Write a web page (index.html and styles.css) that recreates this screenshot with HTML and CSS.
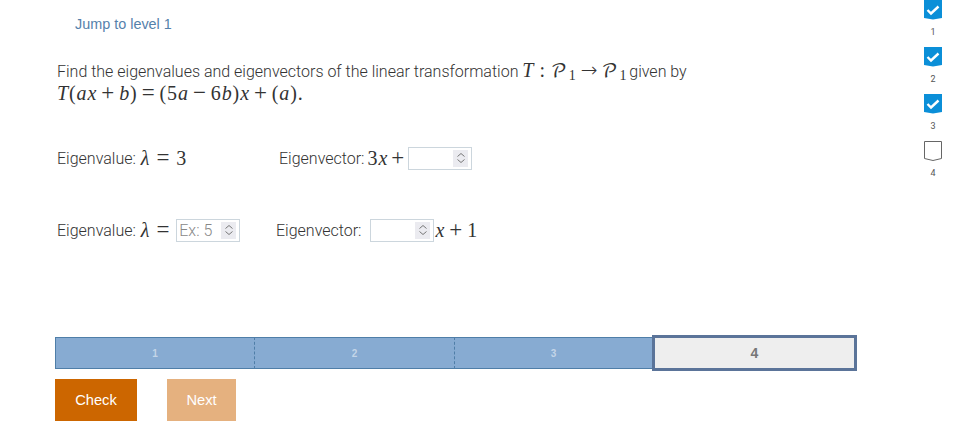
FILE: index.html
```html
<!DOCTYPE html>
<html lang="en">
  <head>
    <meta charset="UTF-8" />
    <title>Eigenvalues and eigenvectors</title>
    <link rel="stylesheet" href="styles.css">
  </head>
  <body>
    <div class="page">
      <div class="main">
        <a href="#" class="jump-link">Jump to level 1</a>

        <p class="question">
          Find the eigenvalues and eigenvectors of the linear transformation
          <span class="math"><i>T</i><span class="op colon">:</span><span class="script">𝒫</span><sub>1</sub><span class="op arrow">→</span><span class="script">𝒫</span><sub>1</sub></span>
          given by<br>
          <span class="math"><i>T</i>(<i>ax</i><span class="op">+</span><i>b</i>)<span class="op">=</span>(5<i>a</i><span class="op">−</span>6<i>b</i>)<i>x</i><span class="op">+</span>(<i>a</i>).</span>
        </p>

        <div class="answer-row row-first">
          <div class="value-cell">
            <span>Eigenvalue:</span>
            <span class="math"><i>λ</i><span class="op">=</span>3</span>
          </div>
          <div class="vector-cell">
            <span>Eigenvector:</span>
            <span class="math">3<i>x</i><span class="op trailing">+</span></span>
            <span class="num-input">
              <input type="text" aria-label="Eigenvector coefficient">
              <span class="spin"><svg viewBox="0 0 10 14" width="10" height="14"><path d="M1.5 5.5 5 2.5 8.5 5.5M1.5 8.5 5 11.5 8.5 8.5" /></svg></span>
            </span>
          </div>
        </div>

        <div class="answer-row row-second">
          <div class="value-cell">
            <span>Eigenvalue:</span>
            <span class="math"><i>λ</i><span class="op">=</span></span>
            <span class="num-input">
              <input type="text" placeholder="Ex: 5" aria-label="Eigenvalue">
              <span class="spin"><svg viewBox="0 0 10 14" width="10" height="14"><path d="M1.5 5.5 5 2.5 8.5 5.5M1.5 8.5 5 11.5 8.5 8.5" /></svg></span>
            </span>
          </div>
          <div class="vector-cell second">
            <span class="vector-label">Eigenvector:</span>
            <span class="num-input">
              <input type="text" aria-label="Eigenvector coefficient">
              <span class="spin"><svg viewBox="0 0 10 14" width="10" height="14"><path d="M1.5 5.5 5 2.5 8.5 5.5M1.5 8.5 5 11.5 8.5 8.5" /></svg></span>
            </span>
            <span class="math"><i>x</i><span class="op">+</span>1</span>
          </div>
        </div>

        <div class="levels">
          <div class="level">1</div>
          <div class="level">2</div>
          <div class="level">3</div>
          <div class="level current">4</div>
        </div>

        <div class="btn-container">
          <button class="btn btn-check">Check</button>
          <button class="btn btn-next">Next</button>
        </div>
      </div>

      <div class="progress">
        <div class="step">
          <svg class="flag" viewBox="0 0 18 20" width="18" height="20"><path class="done" d="M0 0H18V18L9 19.5 0 18Z" /><path class="tick" d="M3.5 10 7 13.5 14.5 6.5" /></svg>
          <span>1</span>
        </div>
        <div class="step">
          <svg class="flag" viewBox="0 0 18 20" width="18" height="20"><path class="done" d="M0 0H18V18L9 19.5 0 18Z" /><path class="tick" d="M3.5 10 7 13.5 14.5 6.5" /></svg>
          <span>2</span>
        </div>
        <div class="step">
          <svg class="flag" viewBox="0 0 18 20" width="18" height="20"><path class="done" d="M0 0H18V18L9 19.5 0 18Z" /><path class="tick" d="M3.5 10 7 13.5 14.5 6.5" /></svg>
          <span>3</span>
        </div>
        <div class="step">
          <svg class="flag" viewBox="0 0 18 20" width="18" height="20"><path class="todo" d="M.5.5H17.5V17.5L9 19.5 .5 17.5Z" /></svg>
          <span>4</span>
        </div>
      </div>
    </div>
  </body>
</html>
```

FILE: styles.css
```css
html,
body {
  margin: 0;
  padding: 0;
  background-color: white;
}
body {
  font-family: Roboto, "Liberation Sans", sans-serif;
  font-weight: 300;
  font-size: 16px;
  color: #333;
  overflow: hidden;
}
.page {
  display: flex;
  width: 958px;
  height: 437px;
}
.main {
  width: 801px;
  margin-left: 55px;
  flex: none;
}
.jump-link {
  display: block;
  margin: 15px 0 0 20px;
  font-family: "Liberation Sans", sans-serif;
  font-size: 14.4px;
  font-weight: 400;
  line-height: 18px;
  color: #5581ab;
  text-decoration: none;
}
.question {
  margin: 27px 0 0 2px;
  height: 44px;
  line-height: 23px;
  white-space: nowrap;
}
.math {
  font-family: "Liberation Serif", serif;
  font-size: 20px;
  font-weight: 400;
  letter-spacing: 0.9px;
  color: #333;
  line-height: 18px;
}
.math sub {
  font-size: 14px;
  line-height: 0;
  vertical-align: -3px;
  margin-left: 1px;
  letter-spacing: 0;
}
.math sub:last-child {
  margin-right: -1px;
}
.op {
  margin: 0 4px;
  font-size: 23px;
  line-height: 0;
}
.colon {
  font-size: 20px;
  margin: 0 5px;
}
.trailing {
  margin: 0 0 0 3px;
}
.arrow {
  font-family: "DejaVu Sans", sans-serif;
  font-size: 20px;
  font-weight: 200;
  margin: 0 3px 0 5px;
}
.script {
  font-family: "DejaVu Math TeX Gyre", "DejaVu Serif", serif;
  font-size: 19px;
  line-height: 0;
}
.answer-row {
  display: flex;
  align-items: center;
  margin-left: 2px;
  height: 24px;
}
.row-first {
  margin-top: 42px;
}
.row-second {
  margin-top: 48px;
}
.value-cell {
  display: flex;
  align-items: center;
  gap: 5px;
  width: 222px;
  flex: none;
}
.value-cell .op {
  margin: 0 6px;
}
.value-cell .num-input {
  margin-left: -5px;
}
.vector-cell {
  display: flex;
  align-items: center;
  gap: 3px;
}
.vector-cell.second {
  margin-left: -3px;
}
.vector-cell.second .math {
  margin-left: -2px;
}
.vector-label {
  margin-right: 6px;
}
.num-input {
  display: inline-flex;
  align-items: center;
  box-sizing: border-box;
  width: 64px;
  height: 23px;
  border: 1px solid #ccd6dd;
  background-color: white;
}
.num-input input {
  width: 100%;
  min-width: 0;
  border: none;
  outline: none;
  padding: 0 0 0 2px;
  font-family: inherit;
  font-size: 16px;
  font-weight: 300;
  background: transparent;
}
.num-input input::placeholder {
  color: #888;
  opacity: 1;
}
.spin {
  display: flex;
  align-items: center;
  justify-content: center;
  flex: none;
  width: 15px;
  height: 17px;
  margin-right: 3px;
  background-color: #ebebf0;
}
.spin path {
  fill: none;
  stroke: #777;
  stroke-width: 1;
}
.levels {
  display: flex;
  align-items: center;
  margin-top: 93px;
  height: 36px;
}
.level {
  box-sizing: border-box;
  flex: none;
  width: 200px;
  height: 32px;
  display: flex;
  align-items: center;
  justify-content: center;
  background-color: #87abd2;
  border: 1px solid #4f7ea8;
  border-left: none;
  border-right: 1px dashed #4f7ea8;
  font-family: "Liberation Sans", sans-serif;
  font-size: 10px;
  font-weight: 700;
  color: #c3d5e8;
}
.level:first-child {
  border-left: 1px solid #4f7ea8;
}
.level:nth-child(3) {
  width: 197px;
  border-right: none;
}
.level.current {
  width: 205px;
  height: 36px;
  background-color: #eee;
  border: 3px solid #5b7499;
  font-size: 14px;
  color: #777;
}
.btn-container {
  display: flex;
  gap: 30px;
  margin-top: 8px;
}
.btn {
  height: 42px;
  border: none;
  padding: 0;
  font-family: "Liberation Sans", sans-serif;
  font-size: 14.7px;
  font-weight: 400;
  color: white;
  cursor: pointer;
}
.btn-check {
  width: 82px;
  background-color: #cc6600;
}
.btn-next {
  width: 69px;
  background-color: #e5b17f;
}
.progress {
  display: flex;
  flex-direction: column;
  margin-left: 68px;
  width: 18px;
  flex: none;
}
.step {
  display: flex;
  flex-direction: column;
  align-items: center;
  height: 47px;
  font-size: 9px;
  font-weight: 400;
  color: #555;
}
.step span {
  margin-top: 7px;
  line-height: 11px;
}
.flag {
  display: block;
  flex: none;
}
.done {
  fill: #0b8fd8;
}
.tick {
  fill: none;
  stroke: white;
  stroke-width: 2.4;
}
.todo {
  fill: white;
  stroke: #666;
  stroke-width: 1;
}
```
